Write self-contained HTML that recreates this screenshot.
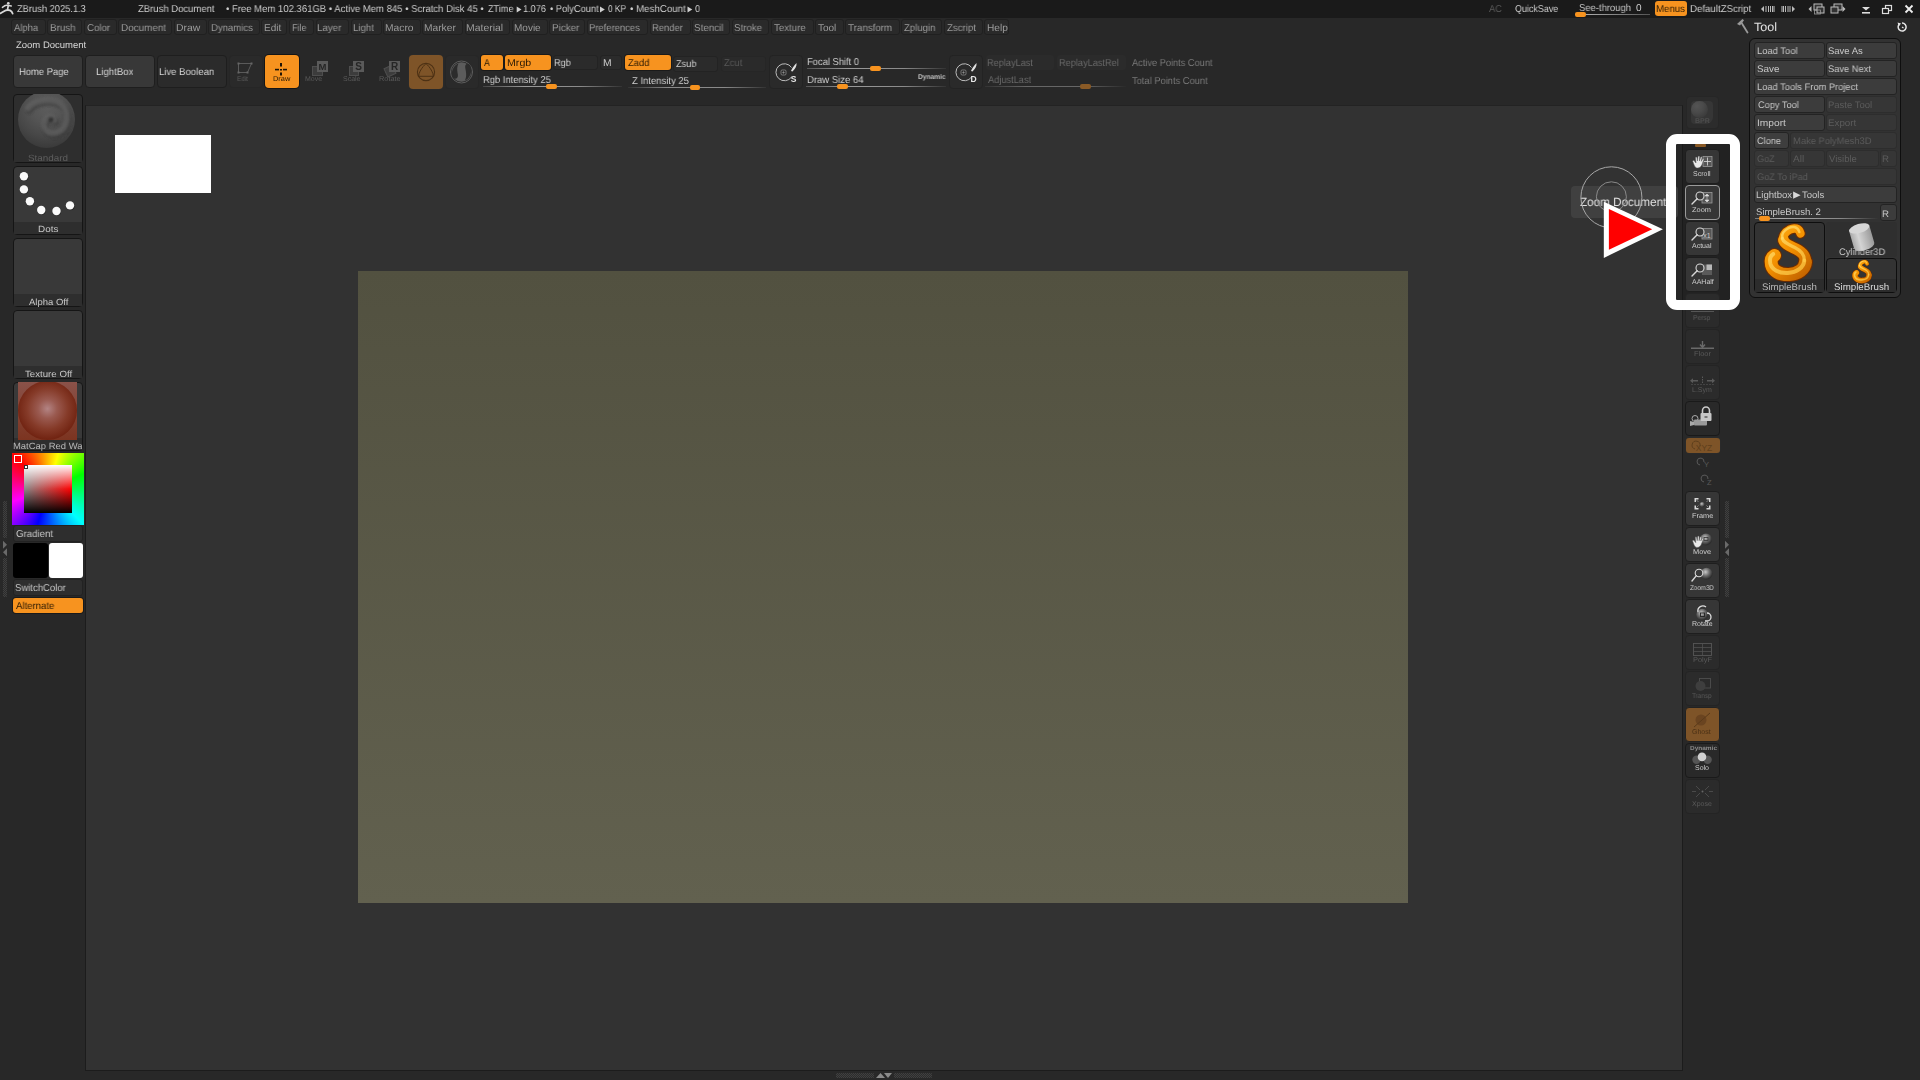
<!DOCTYPE html>
<html><head><meta charset="utf-8">
<style>
*{box-sizing:border-box;margin:0;padding:0}
html,body{width:1920px;height:1080px;overflow:hidden;background:#282828;font-family:"Liberation Sans",sans-serif;position:relative}
.a{position:absolute}
.t{position:absolute;white-space:nowrap;line-height:1;transform-origin:0 0;-webkit-font-smoothing:antialiased;will-change:transform;text-rendering:geometricPrecision}
svg{position:absolute;overflow:visible}
</style></head><body>
<div class="a" style="left:0px;top:0px;width:1920px;height:18px;background:#1a1a1a;"></div>
<div class="t" style="left:17.00px;top:5px;font-size:10px;color:#d0d0d0;transform:scaleX(0.9315);">ZBrush 2025.1.3</div>
<div class="t" style="left:138.00px;top:5px;font-size:10px;color:#d0d0d0;transform:scaleX(0.9500);">ZBrush Document</div>
<div class="t" style="left:226.00px;top:5px;font-size:10px;color:#d0d0d0;transform:scaleX(0.9519);">• Free Mem 102.361GB • Active Mem 845 • Scratch Disk 45 •</div>
<div class="t" style="left:487.80px;top:5px;font-size:10px;color:#d0d0d0;transform:scaleX(0.9107);">ZTime</div>
<div class="t" style="left:523.28px;top:5px;font-size:10px;color:#d0d0d0;transform:scaleX(0.9167);">1.076</div>
<div class="t" style="left:550.00px;top:5px;font-size:10px;color:#d0d0d0;transform:scaleX(0.9288);">• PolyCount</div>
<div class="t" style="left:607.50px;top:5px;font-size:10px;color:#d0d0d0;transform:scaleX(0.8333);">0 KP</div>
<div class="t" style="left:630.00px;top:5px;font-size:10px;color:#d0d0d0;transform:scaleX(0.9702);">• MeshCount</div>
<div class="t" style="left:694.70px;top:5px;font-size:10px;color:#d0d0d0;transform:scaleX(0.9000);">0</div>
<svg style="left:0;top:0" width="720" height="17"><g fill="#d0d0d0"><polygon points="516.7,6.5 521.5,9.5 516.7,12.5"/><polygon points="600,6.5 604.8,9.5 600,12.5"/><polygon points="687.5,6.5 692.3,9.5 687.5,12.5"/></g></svg>
<div class="t" style="left:1489.00px;top:5px;font-size:10px;color:#5a5a5a;transform:scaleX(0.9231);">AC</div>
<div class="t" style="left:1515.00px;top:5px;font-size:10px;color:#d0d0d0;transform:scaleX(0.8958);">QuickSave</div>
<div class="t" style="left:1579.06px;top:4px;font-size:10px;color:#c8c8c8;transform:scaleX(0.9444);">See-through</div>
<div class="t" style="left:1636.00px;top:4px;font-size:10px;color:#d0d0d0;">0</div>
<div class="a" style="left:1575px;top:14px;width:75px;height:1px;background:linear-gradient(90deg,#bbb,#555);"></div>
<div class="a" style="left:1575px;top:12px;width:11px;height:5px;background:#f7931f;border-radius:2px;"></div>
<div class="a" style="left:1655px;top:1px;width:32px;height:15px;background:#f7931f;border-radius:3px;"></div>
<div class="t" style="left:1656.03px;top:5px;font-size:10px;color:#2a1a05;transform:scaleX(0.9655);">Menus</div>
<div class="t" style="left:1690.03px;top:5px;font-size:10px;color:#d0d0d0;transform:scaleX(0.9677);">DefaultZScript</div>
<div class="a" style="left:11px;top:19px;width:35px;height:16px;background:#2a2a2a;border:1px solid #202020;border-radius:3px;"></div>
<div class="t" style="left:14.00px;top:24px;font-size:10px;color:#9c9c9c;transform:scaleX(0.9400);">Alpha</div>
<div class="a" style="left:47px;top:19px;width:35px;height:16px;background:#2a2a2a;border:1px solid #202020;border-radius:3px;"></div>
<div class="t" style="left:49.52px;top:24px;font-size:10px;color:#9c9c9c;transform:scaleX(0.9800);">Brush</div>
<div class="a" style="left:84px;top:19px;width:33px;height:16px;background:#2a2a2a;border:1px solid #202020;border-radius:3px;"></div>
<div class="t" style="left:86.70px;top:24px;font-size:10px;color:#9c9c9c;transform:scaleX(0.9696);">Color</div>
<div class="a" style="left:118px;top:19px;width:54px;height:16px;background:#2a2a2a;border:1px solid #202020;border-radius:3px;"></div>
<div class="t" style="left:120.51px;top:24px;font-size:10px;color:#9c9c9c;transform:scaleX(0.9886);">Document</div>
<div class="a" style="left:174px;top:19px;width:33px;height:16px;background:#2a2a2a;border:1px solid #202020;border-radius:3px;"></div>
<div class="t" style="left:175.66px;top:24px;font-size:10px;color:#9c9c9c;transform:scaleX(1.0364);">Draw</div>
<div class="a" style="left:208px;top:19px;width:52px;height:16px;background:#2a2a2a;border:1px solid #202020;border-radius:3px;"></div>
<div class="t" style="left:210.55px;top:24px;font-size:10px;color:#9c9c9c;transform:scaleX(0.9535);">Dynamics</div>
<div class="a" style="left:261px;top:19px;width:26px;height:16px;background:#2a2a2a;border:1px solid #202020;border-radius:3px;"></div>
<div class="t" style="left:263.50px;top:24px;font-size:10px;color:#9c9c9c;">Edit</div>
<div class="a" style="left:289px;top:19px;width:25px;height:16px;background:#2a2a2a;border:1px solid #202020;border-radius:3px;"></div>
<div class="t" style="left:291.60px;top:24px;font-size:10px;color:#9c9c9c;transform:scaleX(0.9000);">File</div>
<div class="a" style="left:316px;top:19px;width:33px;height:16px;background:#2a2a2a;border:1px solid #202020;border-radius:3px;"></div>
<div class="t" style="left:317.32px;top:24px;font-size:10px;color:#9c9c9c;transform:scaleX(0.9750);">Layer</div>
<div class="a" style="left:351px;top:19px;width:31px;height:16px;background:#2a2a2a;border:1px solid #202020;border-radius:3px;"></div>
<div class="t" style="left:352.73px;top:24px;font-size:10px;color:#9c9c9c;transform:scaleX(0.9667);">Light</div>
<div class="a" style="left:383px;top:19px;width:38px;height:16px;background:#2a2a2a;border:1px solid #202020;border-radius:3px;"></div>
<div class="t" style="left:385.27px;top:24px;font-size:10px;color:#9c9c9c;transform:scaleX(1.0269);">Macro</div>
<div class="a" style="left:422px;top:19px;width:41px;height:16px;background:#2a2a2a;border:1px solid #202020;border-radius:3px;"></div>
<div class="t" style="left:424.28px;top:24px;font-size:10px;color:#9c9c9c;transform:scaleX(1.0233);">Marker</div>
<div class="a" style="left:465px;top:19px;width:45px;height:16px;background:#2a2a2a;border:1px solid #202020;border-radius:3px;"></div>
<div class="t" style="left:466.46px;top:24px;font-size:10px;color:#9c9c9c;transform:scaleX(1.0441);">Material</div>
<div class="a" style="left:512px;top:19px;width:36px;height:16px;background:#2a2a2a;border:1px solid #202020;border-radius:3px;"></div>
<div class="t" style="left:514.31px;top:24px;font-size:10px;color:#9c9c9c;transform:scaleX(0.9880);">Movie</div>
<div class="a" style="left:549px;top:19px;width:36px;height:16px;background:#2a2a2a;border:1px solid #202020;border-radius:3px;"></div>
<div class="t" style="left:551.52px;top:24px;font-size:10px;color:#9c9c9c;transform:scaleX(0.9808);">Picker</div>
<div class="a" style="left:587px;top:19px;width:61px;height:16px;background:#2a2a2a;border:1px solid #202020;border-radius:3px;"></div>
<div class="t" style="left:589.36px;top:24px;font-size:10px;color:#9c9c9c;transform:scaleX(0.9434);">Preferences</div>
<div class="a" style="left:650px;top:19px;width:41px;height:16px;background:#2a2a2a;border:1px solid #202020;border-radius:3px;"></div>
<div class="t" style="left:652.36px;top:24px;font-size:10px;color:#9c9c9c;transform:scaleX(0.9419);">Render</div>
<div class="a" style="left:692px;top:19px;width:38px;height:16px;background:#2a2a2a;border:1px solid #202020;border-radius:3px;"></div>
<div class="t" style="left:694.02px;top:24px;font-size:10px;color:#9c9c9c;transform:scaleX(0.9821);">Stencil</div>
<div class="a" style="left:732px;top:19px;width:37px;height:16px;background:#2a2a2a;border:1px solid #202020;border-radius:3px;"></div>
<div class="t" style="left:733.73px;top:24px;font-size:10px;color:#9c9c9c;transform:scaleX(0.9741);">Stroke</div>
<div class="a" style="left:771px;top:19px;width:43px;height:16px;background:#2a2a2a;border:1px solid #202020;border-radius:3px;"></div>
<div class="t" style="left:774.00px;top:24px;font-size:10px;color:#9c9c9c;transform:scaleX(0.9688);">Texture</div>
<div class="a" style="left:815px;top:19px;width:29px;height:16px;background:#2a2a2a;border:1px solid #202020;border-radius:3px;"></div>
<div class="t" style="left:818.00px;top:24px;font-size:10px;color:#9c9c9c;transform:scaleX(0.9889);">Tool</div>
<div class="a" style="left:845px;top:19px;width:55px;height:16px;background:#2a2a2a;border:1px solid #202020;border-radius:3px;"></div>
<div class="t" style="left:848.00px;top:24px;font-size:10px;color:#9c9c9c;transform:scaleX(0.9778);">Transform</div>
<div class="a" style="left:901px;top:19px;width:41px;height:16px;background:#2a2a2a;border:1px solid #202020;border-radius:3px;"></div>
<div class="t" style="left:904.40px;top:24px;font-size:10px;color:#9c9c9c;transform:scaleX(0.9563);">Zplugin</div>
<div class="a" style="left:944px;top:19px;width:39px;height:16px;background:#2a2a2a;border:1px solid #202020;border-radius:3px;"></div>
<div class="t" style="left:947.00px;top:24px;font-size:10px;color:#9c9c9c;transform:scaleX(0.9667);">Zscript</div>
<div class="a" style="left:984px;top:19px;width:25px;height:16px;background:#2a2a2a;border:1px solid #202020;border-radius:3px;"></div>
<div class="t" style="left:986.68px;top:24px;font-size:10px;color:#9c9c9c;transform:scaleX(1.0158);">Help</div>
<div class="t" style="left:16.30px;top:41px;font-size:9.5px;color:#d8d8d8;">Zoom Document</div>
<div class="a" style="left:85px;top:105px;width:1598px;height:966px;background:#323232;border:1px solid #1c1c1c;border-top-color:#232323;"></div>
<div class="a" style="left:358px;top:271px;width:1050px;height:632px;background:linear-gradient(#525140,#62614f)"></div>
<div class="a" style="left:115px;top:135px;width:96px;height:58px;background:#ffffff;"></div>
<div class="a" style="left:13px;top:55px;width:70px;height:33px;background:#383838;border:1px solid #1e1e1e;border-radius:4px;"></div>
<div class="a" style="left:85px;top:55px;width:70px;height:33px;background:#383838;border:1px solid #1e1e1e;border-radius:4px;"></div>
<div class="a" style="left:157px;top:55px;width:70px;height:33px;background:#2b2b2b;border:1px solid #1e1e1e;border-radius:4px;"></div>
<div class="t" style="left:19.06px;top:68px;font-size:10px;color:#d8d8d8;transform:scaleX(0.9412);">Home Page</div>
<div class="t" style="left:95.54px;top:68px;font-size:10px;color:#d8d8d8;transform:scaleX(0.9605);">LightBox</div>
<div class="t" style="left:158.54px;top:68px;font-size:10px;color:#d8d8d8;transform:scaleX(0.9554);">Live Boolean</div>
<div class="a" style="left:229px;top:55px;width:34px;height:33px;background:#2a2a2a;border:1px solid #262626;border-radius:4px;"></div>
<div class="a" style="left:265px;top:55px;width:34px;height:33px;background:#f7931f;box-shadow:0 0 0 1px #151515;border-radius:4px;"></div>
<div class="a" style="left:409px;top:55px;width:34px;height:34px;background:#7e5428;box-shadow:0 0 0 1px #2a2a2a;border-radius:4px;"></div>
<div class="a" style="left:445px;top:55px;width:34px;height:34px;background:#2a2a2a;border:1px solid #262626;border-radius:4px;"></div>
<div class="t" style="left:237.00px;top:76px;font-size:7px;color:#5a5a5a;transform:scaleX(0.9167);">Edit</div>
<div class="t" style="left:273.00px;top:76px;font-size:7px;color:#2a1a05;transform:scaleX(1.0625);">Draw</div>
<div class="t" style="left:305.00px;top:76px;font-size:7px;color:#5a5a5a;">Move</div>
<div class="t" style="left:343.00px;top:76px;font-size:7px;color:#5a5a5a;">Scale</div>
<div class="t" style="left:379.00px;top:76px;font-size:7px;color:#5a5a5a;transform:scaleX(1.0500);">Rotate</div>
<div class="a" style="left:481px;top:55px;width:22px;height:15px;background:#f7931f;box-shadow:0 0 0 1px #1a1a1a;border-radius:3px;"></div>
<div class="a" style="left:505px;top:55px;width:46px;height:15px;background:#f7931f;box-shadow:0 0 0 1px #1a1a1a;border-radius:3px;"></div>
<div class="a" style="left:553px;top:55px;width:45px;height:15px;background:#2b2b2b;border:1px solid #232323;border-radius:3px;"></div>
<div class="a" style="left:600px;top:55px;width:22px;height:15px;background:#2b2b2b;border:1px solid #232323;border-radius:3px;"></div>
<div class="t" style="left:483.80px;top:59px;font-size:10px;color:#2a1a05;transform:scaleX(0.8857);">A</div>
<div class="t" style="left:506.64px;top:59px;font-size:10px;color:#2a1a05;transform:scaleX(1.0619);">Mrgb</div>
<div class="t" style="left:554.48px;top:59px;font-size:10px;color:#d0d0d0;transform:scaleX(0.9176);">Rgb</div>
<div class="t" style="left:602.77px;top:59px;font-size:10px;color:#d0d0d0;transform:scaleX(1.0286);">M</div>
<div class="t" style="left:482.86px;top:76px;font-size:10px;color:#d0d0d0;transform:scaleX(0.9380);">Rgb Intensity 25</div>
<div class="a" style="left:483px;top:86px;width:139px;height:1px;background:linear-gradient(90deg,#444,#9a9a9a 30%,#8a8a8a 70%,#333);"></div>
<div class="a" style="left:546px;top:84px;width:11px;height:5px;background:#f7931f;border-radius:2px;"></div>
<div class="a" style="left:625px;top:55px;width:46px;height:15px;background:#f7931f;box-shadow:0 0 0 1px #1a1a1a;border-radius:3px;"></div>
<div class="a" style="left:673px;top:56px;width:45px;height:16px;background:#2b2b2b;border:1px solid #232323;border-radius:3px;"></div>
<div class="a" style="left:721px;top:56px;width:45px;height:16px;background:#2a2a2a;border:1px solid #262626;border-radius:3px;"></div>
<div class="t" style="left:627.70px;top:59px;font-size:10px;color:#2a1a05;transform:scaleX(0.9364);">Zadd</div>
<div class="t" style="left:675.70px;top:60px;font-size:10px;color:#d0d0d0;transform:scaleX(0.9227);">Zsub</div>
<div class="t" style="left:723.80px;top:59px;font-size:10px;color:#585858;transform:scaleX(0.9421);">Zcut</div>
<div class="t" style="left:632.00px;top:77px;font-size:10px;color:#d0d0d0;transform:scaleX(0.9467);">Z Intensity 25</div>
<div class="a" style="left:628px;top:87px;width:138px;height:1px;background:linear-gradient(90deg,#333,#8a8a8a 30%,#8a8a8a 70%,#333);"></div>
<div class="a" style="left:690px;top:85px;width:10px;height:5px;background:#f7931f;border-radius:2px;"></div>
<div class="a" style="left:769px;top:55px;width:34px;height:34px;background:#2a2a2a;border:1px solid #232323;border-radius:4px;"></div>
<div class="t" style="left:806.76px;top:58px;font-size:10px;color:#d0d0d0;transform:scaleX(0.9352);">Focal Shift 0</div>
<div class="t" style="left:806.75px;top:76px;font-size:10px;color:#d0d0d0;transform:scaleX(0.9517);">Draw Size 64</div>
<div class="t" style="left:917.60px;top:74px;font-size:7px;color:#bdbdbd;font-weight:700;transform:scaleX(0.9448);">Dynamic</div>
<div class="a" style="left:807px;top:68px;width:139px;height:1px;background:linear-gradient(90deg,#555,#9a9a9a 30%,#8a8a8a 70%,#333);"></div>
<div class="a" style="left:870px;top:66px;width:11px;height:5px;background:#f7931f;border-radius:2px;"></div>
<div class="a" style="left:806px;top:86px;width:140px;height:1px;background:linear-gradient(90deg,#555,#9a9a9a 30%,#8a8a8a 70%,#333);"></div>
<div class="a" style="left:837px;top:84px;width:11px;height:5px;background:#f7931f;border-radius:2px;"></div>
<div class="a" style="left:949px;top:55px;width:34px;height:34px;background:#2a2a2a;border:1px solid #232323;border-radius:4px;"></div>
<div class="a" style="left:986px;top:55px;width:68px;height:15px;background:#2b2b2b;border-radius:3px;"></div>
<div class="a" style="left:1057px;top:55px;width:69px;height:15px;background:#2b2b2b;border-radius:3px;"></div>
<div class="t" style="left:986.68px;top:59px;font-size:10px;color:#6a6a6a;transform:scaleX(0.9163);">ReplayLast</div>
<div class="t" style="left:1058.58px;top:59px;font-size:10px;color:#6a6a6a;transform:scaleX(0.9190);">ReplayLastRel</div>
<div class="t" style="left:987.60px;top:76px;font-size:10px;color:#6a6a6a;transform:scaleX(0.9234);">AdjustLast</div>
<div class="a" style="left:985px;top:86px;width:141px;height:1px;background:linear-gradient(90deg,#333,#666 30%,#666 70%,#2a2a2a);"></div>
<div class="a" style="left:1080px;top:84px;width:11px;height:5px;background:#8a5a26;border-radius:2px;"></div>
<div class="t" style="left:1131.70px;top:59px;font-size:10px;color:#7a7a7a;transform:scaleX(0.9230);">Active Points Count</div>
<div class="t" style="left:1132.00px;top:77px;font-size:10px;color:#7a7a7a;transform:scaleX(0.9321);">Total Points Count</div>
<div class="a" style="left:13px;top:94px;width:70px;height:69px;background:#2e2e2e;border:1px solid #151515;border-radius:4px;"></div>
<div class="a" style="left:14px;top:150px;width:68px;height:12px;background:#2e2e2e;"></div>
<div class="t" style="left:27.90px;top:154px;font-size:9px;color:#5e5e5e;transform:scaleX(1.0971);">Standard</div>
<div class="a" style="left:13px;top:166px;width:70px;height:69px;background:#393939;border:1px solid #151515;border-radius:4px;"></div>
<div class="a" style="left:14px;top:222px;width:68px;height:12px;background:#2e2e2e;"></div>
<div class="t" style="left:37.80px;top:225px;font-size:9px;color:#c8c8c8;transform:scaleX(1.1000);">Dots</div>
<div class="a" style="left:13px;top:238px;width:70px;height:69px;background:#393939;border:1px solid #151515;border-radius:4px;"></div>
<div class="a" style="left:14px;top:294px;width:68px;height:12px;background:#2e2e2e;"></div>
<div class="t" style="left:29.00px;top:298px;font-size:9px;color:#c8c8c8;transform:scaleX(1.0541);">Alpha Off</div>
<div class="a" style="left:13px;top:310px;width:70px;height:69px;background:#393939;border:1px solid #151515;border-radius:4px;"></div>
<div class="a" style="left:14px;top:366px;width:68px;height:12px;background:#2e2e2e;"></div>
<div class="t" style="left:24.70px;top:370px;font-size:9px;color:#c8c8c8;transform:scaleX(1.0750);">Texture Off</div>
<div class="a" style="left:13px;top:382px;width:70px;height:69px;background:#393939;border:1px solid #151515;border-radius:4px;"></div>
<div class="a" style="left:14px;top:438px;width:68px;height:12px;background:#2e2e2e;"></div>
<div class="a" style="left:0;top:0;width:82px;height:460px;overflow:hidden">
<div class="t" style="left:12.55px;top:442px;font-size:9px;color:#b8b8b8;transform:scaleX(1.0493);">MatCap Red Wax</div>
</div>
<div class="a" style="left:12px;top:453px;width:72px;height:72px;background:conic-gradient(from -45deg,#f00,#ff0 17%,#0f0 31%,#0ff 50%,#00f 67%,#f0f 82%,#f00)"></div>
<div class="a" style="left:24px;top:465px;width:48px;height:48px;background:linear-gradient(180deg,#fff 0%,rgba(255,255,255,0) 50%,rgba(0,0,0,0) 50%,#000 100%),linear-gradient(90deg,#888,#f00)"></div>
<div class="a" style="left:14px;top:455px;width:8px;height:8px;background:#f00;border:1px solid #fff;"></div>
<div class="a" style="left:24px;top:465px;width:4px;height:4px;background:#fff;border:1px solid #333;"></div>
<div class="a" style="left:13px;top:525px;width:70px;height:17px;background:#2e2e2e;border:1px solid #222222;border-radius:3px;"></div>
<div class="t" style="left:15.60px;top:530px;font-size:10px;color:#c8c8c8;transform:scaleX(0.9658);">Gradient</div>
<div class="a" style="left:13px;top:543px;width:35px;height:35px;background:#000;border-radius:3px;"></div>
<div class="a" style="left:49px;top:543px;width:34px;height:35px;background:#fff;border-radius:3px;"></div>
<div class="a" style="left:13px;top:579px;width:70px;height:17px;background:#2e2e2e;border:1px solid #222222;border-radius:3px;"></div>
<div class="t" style="left:14.65px;top:584px;font-size:10px;color:#c8c8c8;transform:scaleX(0.9500);">SwitchColor</div>
<div class="a" style="left:13px;top:598px;width:70px;height:15px;background:#f7931f;box-shadow:0 0 0 1px #1a1a1a;border-radius:3px;"></div>
<div class="t" style="left:15.60px;top:602px;font-size:10px;color:#2a1a05;transform:scaleX(0.9575);">Alternate</div>
<div class="a" style="left:1686px;top:96px;width:33px;height:33px;background:#2c2c2c;border:1px solid #262626;border-radius:4px;"></div>
<div class="a" style="left:1691px;top:101px;width:22px;height:23px;border-radius:4px 4px 7px 4px;background:#363636"></div>
<div class="a" style="left:1691px;top:101px;width:17px;height:17px;border-radius:50%;background:radial-gradient(circle at 35% 30%,#545454 0,#4a4a4a 40%,#3c3c3c 75%,#2e2e2e 100%)"></div>
<div class="t" style="left:1694.80px;top:118px;font-size:7px;color:#4e4e4e;font-weight:700;transform:scaleX(0.9786);">BPR</div>
<div class="a" style="left:1676px;top:144px;width:54px;height:156px;background:#222"></div>
<div class="a" style="left:1676px;top:144px;width:6px;height:156px;background:#262626"></div>
<div class="a" style="left:1682px;top:144px;width:1px;height:156px;background:#1a1a1a;"></div>
<div class="a" style="left:1695px;top:144px;width:11px;height:3px;background:#8a5a26;border-radius:1px;"></div>
<div class="a" style="left:1685px;top:149px;width:35px;height:35px;background:#363636;border:1px solid #1e1e1e;border-radius:4px;"></div>
<div class="t" style="left:1693.00px;top:171px;font-size:7px;color:#d0d0d0;">Scroll</div>
<div class="a" style="left:1685px;top:185px;width:35px;height:35px;background:#363636;border:1px solid #9a9a9a;border-radius:4px;"></div>
<div class="t" style="left:1692.00px;top:207px;font-size:7px;color:#d0d0d0;transform:scaleX(1.0588);">Zoom</div>
<div class="a" style="left:1685px;top:221px;width:35px;height:35px;background:#363636;border:1px solid #1e1e1e;border-radius:4px;"></div>
<div class="t" style="left:1692.00px;top:243px;font-size:7px;color:#d0d0d0;">Actual</div>
<div class="a" style="left:1685px;top:257px;width:35px;height:35px;background:#363636;border:1px solid #1e1e1e;border-radius:4px;"></div>
<div class="t" style="left:1692.00px;top:279px;font-size:7px;color:#d0d0d0;">AAHalf</div>
<div class="a" style="left:1685px;top:293px;width:35px;height:35px;background:#2b2b2b;border:1px solid #242424;border-radius:4px;"></div>
<div class="t" style="left:1693.00px;top:315px;font-size:7px;color:#5a5a5a;transform:scaleX(0.9444);">Persp</div>
<div class="a" style="left:1685px;top:329px;width:35px;height:35px;background:#2b2b2b;border:1px solid #242424;border-radius:4px;"></div>
<div class="t" style="left:1694.00px;top:351px;font-size:7px;color:#5a5a5a;transform:scaleX(1.0667);">Floor</div>
<div class="a" style="left:1685px;top:365px;width:35px;height:35px;background:#2b2b2b;border:1px solid #242424;border-radius:4px;"></div>
<div class="t" style="left:1692.00px;top:387px;font-size:7px;color:#5a5a5a;">L.Sym</div>
<div class="a" style="left:1685px;top:401px;width:35px;height:35px;background:#292929;border:1px solid #1a1a1a;border-radius:4px;"></div>
<div class="a" style="left:1686px;top:438px;width:34px;height:15px;background:#7e5428;box-shadow:0 0 0 1px #2a2a2a;border-radius:3px;"></div>
<div class="a" style="left:1685px;top:491px;width:35px;height:35px;background:#363636;border:1px solid #1e1e1e;border-radius:4px;"></div>
<div class="t" style="left:1692.00px;top:513px;font-size:7px;color:#d0d0d0;transform:scaleX(1.0500);">Frame</div>
<div class="a" style="left:1685px;top:527px;width:35px;height:35px;background:#363636;border:1px solid #1e1e1e;border-radius:4px;"></div>
<div class="t" style="left:1693.00px;top:549px;font-size:7px;color:#d0d0d0;transform:scaleX(1.0588);">Move</div>
<div class="a" style="left:1685px;top:563px;width:35px;height:35px;background:#363636;border:1px solid #1e1e1e;border-radius:4px;"></div>
<div class="t" style="left:1690.00px;top:585px;font-size:7px;color:#d0d0d0;transform:scaleX(0.8889);">Zoom3D</div>
<div class="a" style="left:1685px;top:599px;width:35px;height:35px;background:#363636;border:1px solid #1e1e1e;border-radius:4px;"></div>
<div class="t" style="left:1692.00px;top:621px;font-size:7px;color:#d0d0d0;">Rotate</div>
<div class="a" style="left:1685px;top:635px;width:35px;height:35px;background:#2b2b2b;border:1px solid #242424;border-radius:4px;"></div>
<div class="t" style="left:1693.00px;top:657px;font-size:7px;color:#5a5a5a;transform:scaleX(1.0588);">PolyF</div>
<div class="a" style="left:1685px;top:671px;width:35px;height:35px;background:#2b2b2b;border:1px solid #242424;border-radius:4px;"></div>
<div class="t" style="left:1692.00px;top:693px;font-size:7px;color:#5a5a5a;transform:scaleX(0.9048);">Transp</div>
<div class="a" style="left:1685px;top:707px;width:35px;height:35px;background:#7e5428;border:1px solid #222;border-radius:4px;"></div>
<div class="t" style="left:1692.00px;top:729px;font-size:7px;color:#4a3015;">Ghost</div>
<div class="a" style="left:1685px;top:743px;width:35px;height:35px;background:#292929;border:1px solid #1a1a1a;border-radius:4px;"></div>
<div class="t" style="left:1695.00px;top:765px;font-size:7px;color:#d0d0d0;">Solo</div>
<div class="t" style="left:1690.00px;top:746px;font-size:6px;color:#8a8a8a;font-weight:700;transform:scaleX(1.0800);">Dynamic</div>
<div class="a" style="left:1685px;top:779px;width:35px;height:35px;background:#2b2b2b;border:1px solid #242424;border-radius:4px;"></div>
<div class="t" style="left:1692.00px;top:801px;font-size:7px;color:#5a5a5a;">Xpose</div>
<div class="a" style="left:1749px;top:38px;width:152px;height:260px;background:#323232;border:1px solid #0e0e0e;border-radius:6px;"></div>
<div class="t" style="left:1754.00px;top:21px;font-size:12px;color:#e0e0e0;transform:scaleX(1.0476);">Tool</div>
<div class="a" style="left:1754px;top:42px;width:71px;height:17px;background:#3c3c3c;border:1px solid #232323;border-radius:3px;"></div>
<div class="t" style="left:1756.71px;top:47px;font-size:9.5px;color:#c8c8c8;transform:scaleX(0.9875);">Load Tool</div>
<div class="a" style="left:1826px;top:42px;width:71px;height:17px;background:#3c3c3c;border:1px solid #232323;border-radius:3px;"></div>
<div class="t" style="left:1827.91px;top:47px;font-size:9.5px;color:#c8c8c8;transform:scaleX(0.9939);">Save As</div>
<div class="a" style="left:1754px;top:60px;width:71px;height:17px;background:#3c3c3c;border:1px solid #232323;border-radius:3px;"></div>
<div class="t" style="left:1756.66px;top:65px;font-size:9.5px;color:#c8c8c8;transform:scaleX(1.0400);">Save</div>
<div class="a" style="left:1826px;top:60px;width:71px;height:17px;background:#3c3c3c;border:1px solid #232323;border-radius:3px;"></div>
<div class="t" style="left:1827.92px;top:65px;font-size:9.5px;color:#c8c8c8;transform:scaleX(0.9791);">Save Next</div>
<div class="a" style="left:1754px;top:78px;width:143px;height:17px;background:#3c3c3c;border:1px solid #232323;border-radius:3px;"></div>
<div class="t" style="left:1756.72px;top:83px;font-size:9.5px;color:#c8c8c8;transform:scaleX(0.9814);">Load Tools From Project</div>
<div class="a" style="left:1754px;top:96px;width:71px;height:17px;background:#3c3c3c;border:1px solid #232323;border-radius:3px;"></div>
<div class="t" style="left:1757.70px;top:101px;font-size:9.5px;color:#c8c8c8;transform:scaleX(0.9667);">Copy Tool</div>
<div class="a" style="left:1826px;top:96px;width:71px;height:17px;background:#363636;border:1px solid #2d2d2d;border-radius:3px;"></div>
<div class="t" style="left:1828.40px;top:101px;font-size:9.5px;color:#5c5c5c;">Paste Tool</div>
<div class="a" style="left:1754px;top:114px;width:71px;height:17px;background:#3c3c3c;border:1px solid #232323;border-radius:3px;"></div>
<div class="t" style="left:1756.63px;top:119px;font-size:9.5px;color:#c8c8c8;transform:scaleX(1.0731);">Import</div>
<div class="a" style="left:1826px;top:114px;width:71px;height:17px;background:#363636;border:1px solid #2d2d2d;border-radius:3px;"></div>
<div class="t" style="left:1828.37px;top:119px;font-size:9.5px;color:#5c5c5c;transform:scaleX(1.0269);">Export</div>
<div class="a" style="left:1754px;top:132px;width:35px;height:17px;background:#3e3e3e;border:1px solid #232323;border-radius:3px;"></div>
<div class="t" style="left:1757.00px;top:137px;font-size:9.5px;color:#c8c8c8;transform:scaleX(0.9667);">Clone</div>
<div class="a" style="left:1790px;top:132px;width:107px;height:17px;background:#363636;border:1px solid #2d2d2d;border-radius:3px;"></div>
<div class="t" style="left:1792.61px;top:137px;font-size:9.5px;color:#5c5c5c;transform:scaleX(0.9859);">Make PolyMesh3D</div>
<div class="a" style="left:1754px;top:150px;width:35px;height:17px;background:#363636;border:1px solid #2d2d2d;border-radius:3px;"></div>
<div class="t" style="left:1757.00px;top:155px;font-size:9.5px;color:#5c5c5c;transform:scaleX(0.9556);">GoZ</div>
<div class="a" style="left:1790px;top:150px;width:35px;height:17px;background:#363636;border:1px solid #2d2d2d;border-radius:3px;"></div>
<div class="t" style="left:1792.70px;top:155px;font-size:9.5px;color:#5c5c5c;transform:scaleX(1.0600);">All</div>
<div class="a" style="left:1826px;top:150px;width:53px;height:17px;background:#363636;border:1px solid #2d2d2d;border-radius:3px;"></div>
<div class="t" style="left:1828.80px;top:155px;font-size:9.5px;color:#5c5c5c;transform:scaleX(0.9926);">Visible</div>
<div class="a" style="left:1880px;top:150px;width:17px;height:17px;background:#363636;border:1px solid #2d2d2d;border-radius:3px;"></div>
<div class="t" style="left:1882.38px;top:155px;font-size:9.5px;color:#5c5c5c;transform:scaleX(1.0200);">R</div>
<div class="a" style="left:1754px;top:168px;width:143px;height:17px;background:#363636;border:1px solid #2d2d2d;border-radius:3px;"></div>
<div class="t" style="left:1757.00px;top:173px;font-size:9.5px;color:#5c5c5c;transform:scaleX(0.9654);">GoZ To iPad</div>
<div class="a" style="left:1754px;top:186px;width:143px;height:17px;background:#3c3c3c;border:1px solid #232323;border-radius:3px;"></div>
<div class="t" style="left:1755.99px;top:191px;font-size:9.5px;color:#c8c8c8;transform:scaleX(1.0057);">Lightbox</div>
<div class="t" style="left:1801.50px;top:191px;font-size:9.5px;color:#c8c8c8;transform:scaleX(0.9864);">Tools</div>
<svg style="left:1790px;top:188px" width="14" height="14"><polygon points="3.1,3.6 10.6,7.2 3.1,10.8" fill="#d8d8d8"/></svg>
<div class="t" style="left:1755.99px;top:208px;font-size:9.5px;color:#c8c8c8;transform:scaleX(1.0079);">SimpleBrush. 2</div>
<div class="a" style="left:1755px;top:218px;width:123px;height:1px;background:linear-gradient(90deg,#777,#aaa 20%,#888 70%,#333);"></div>
<div class="a" style="left:1759px;top:216px;width:11px;height:5px;background:#f7931f;border-radius:2px;"></div>
<div class="a" style="left:1880px;top:204px;width:17px;height:17px;background:#3c3c3c;border:1px solid #232323;border-radius:3px;"></div>
<div class="t" style="left:1882.38px;top:210px;font-size:9.5px;color:#c8c8c8;transform:scaleX(1.0200);">R</div>
<div class="a" style="left:1754px;top:222px;width:71px;height:71px;background:#333333;border:1px solid #0e0e0e;border-radius:4px;"></div>
<div class="a" style="left:1755px;top:279px;width:69px;height:13px;background:#2c2c2c;"></div>
<div class="t" style="left:1762.28px;top:283px;font-size:9.5px;color:#b8b8b8;transform:scaleX(1.0192);">SimpleBrush</div>
<div class="a" style="left:1826px;top:222px;width:71px;height:35px;background:#2f2f2f;border-radius:3px;"></div>
<div class="t" style="left:1838.80px;top:248px;font-size:9.5px;color:#c8c8c8;transform:scaleX(0.9830);">Cylinder3D</div>
<div class="a" style="left:1826px;top:258px;width:71px;height:35px;background:#333333;border:1px solid #0e0e0e;border-radius:4px;"></div>
<div class="a" style="left:1827px;top:279px;width:69px;height:13px;background:#2c2c2c;"></div>
<div class="t" style="left:1833.97px;top:283px;font-size:9.5px;color:#dcdcdc;transform:scaleX(1.0250);">SimpleBrush</div>
<svg style="left:0;top:0" width="0" height="0"><defs><radialGradient id="sg" cx="42%" cy="35%" r="60%"><stop offset="0" stop-color="#c8c8c8"/><stop offset="0.55" stop-color="#6a6a6a"/><stop offset="1" stop-color="#2e2e2e"/></radialGradient></defs></svg>
<div class="a" style="left:14px;top:94px;width:68px;height:56px;overflow:hidden"><div class="a" style="left:4px;top:-3px;width:57px;height:57px;border-radius:50%;background:radial-gradient(circle at 50% 28%,#5c5c5c 0,#555 30%,#474747 60%,#383838 85%,#303030 100%)"></div></div>
<svg style="left:14px;top:94px;" width="68" height="56" viewBox="0 0 68 56"><defs><filter id="bl" x="-20%" y="-20%" width="140%" height="140%"><feGaussianBlur stdDeviation="1.3"/></filter><clipPath id="sc"><circle cx="32.5" cy="25.5" r="28.5"/></clipPath></defs><g clip-path="url(#sc)" filter="url(#bl)" fill="none" stroke-linecap="round"><path d="M14 14 C 20 6, 38 3, 47 10 C 56 18, 54 34, 44 38 C 34 42, 27 33, 31 26 C 34 21, 40 22, 40 26" stroke="#383838" stroke-width="7" opacity="0.55" transform="translate(1.5,2.5)"/><path d="M14 14 C 20 6, 38 3, 47 10 C 56 18, 54 34, 44 38 C 34 42, 27 33, 31 26 C 34 21, 40 22, 40 26" stroke="#626262" stroke-width="5.5" opacity="0.75"/><circle cx="37" cy="25.5" r="2.6" fill="#333" stroke="none"/></g></svg>
<svg style="left:0px;top:160px;" width="90" height="60" viewBox="0 0 90 60"><circle cx="24.5" cy="16.99999999999999" r="4" fill="#1e1e1e" opacity="0.6"/><circle cx="23.9" cy="16.19999999999999" r="4.2" fill="#fafafa"/><circle cx="24.5" cy="30.200000000000006" r="4" fill="#1e1e1e" opacity="0.6"/><circle cx="23.9" cy="29.400000000000006" r="4.2" fill="#fafafa"/><circle cx="30.5" cy="41.999999999999986" r="4" fill="#1e1e1e" opacity="0.6"/><circle cx="29.9" cy="41.19999999999999" r="4.2" fill="#fafafa"/><circle cx="41.85" cy="50.8" r="4" fill="#1e1e1e" opacity="0.6"/><circle cx="41.25" cy="50" r="4.2" fill="#fafafa"/><circle cx="57.1" cy="51.8" r="4" fill="#1e1e1e" opacity="0.6"/><circle cx="56.5" cy="51" r="4.2" fill="#fafafa"/><circle cx="70.6" cy="46.2" r="4" fill="#1e1e1e" opacity="0.6"/><circle cx="70" cy="45.400000000000006" r="4.2" fill="#fafafa"/></svg>
<div class="a" style="left:18px;top:382px;width:59px;height:58px;overflow:hidden;background:linear-gradient(#8a5249,#7c3420)"><div class="a" style="left:0px;top:-1px;width:59px;height:59px;border-radius:50%;background:radial-gradient(circle at 50% 47%,#b38484 0,#9a5a50 22%,#853a28 48%,#6e200e 75%,#4e1406 100%)"></div></div>
<svg style="left:236px;top:61px;" width="20" height="15" viewBox="0 0 20 15"><path d="M2.5 2.5 L15.5 2.5 L11.5 11.5 L2.5 11.5 Z" fill="none" stroke="#5a5a5a" stroke-width="1"/><rect x="1.5" y="1.5" width="2" height="2" fill="#666"/><rect x="14.5" y="1.5" width="2" height="2" fill="#666"/><rect x="1.5" y="10.5" width="2" height="2" fill="#666"/><rect x="10.5" y="10.5" width="2" height="2" fill="#666"/></svg>
<svg style="left:270px;top:60px;" width="22" height="18" viewBox="0 0 22 18"><g fill="#1e1408"><rect x="10" y="3" width="2" height="3.5"/><rect x="10" y="9" width="2" height="1.5"/><rect x="10" y="12.5" width="2" height="3"/><rect x="5" y="8.8" width="4" height="1.6"/><rect x="13" y="8.8" width="4" height="1.6"/></g></svg>
<svg style="left:300px;top:58px;" width="34" height="20" viewBox="0 0 34 20"><rect x="12.5" y="8.5" width="10" height="9" fill="#3c3c3c" stroke="#4e4e4e"/><rect x="17" y="3" width="11" height="11" fill="#5a5a5a"/><text x="22.5" y="12.3" font-family="Liberation Sans" font-weight="700" font-size="9.5" text-anchor="middle" fill="#262626">M</text></svg>
<svg style="left:336px;top:58px;" width="34" height="20" viewBox="0 0 34 20"><rect x="13.5" y="8.5" width="9" height="9" fill="#3c3c3c" stroke="#4e4e4e"/><rect x="17" y="3" width="11" height="11" fill="#5a5a5a"/><text x="22.5" y="12.3" font-family="Liberation Sans" font-weight="700" font-size="10" text-anchor="middle" fill="#262626">S</text></svg>
<svg style="left:372px;top:58px;" width="34" height="20" viewBox="0 0 34 20"><rect x="13.5" y="8.5" width="9" height="9" fill="#3c3c3c" stroke="#4e4e4e" transform="rotate(-25 18 13)"/><rect x="17" y="3" width="11" height="11" fill="#5a5a5a"/><text x="22.5" y="12.3" font-family="Liberation Sans" font-weight="700" font-size="10" text-anchor="middle" fill="#262626">R</text></svg>
<svg style="left:409px;top:55px;" width="34" height="34" viewBox="0 0 34 34"><circle cx="17" cy="17" r="8.6" fill="none" stroke="#4d3114" stroke-width="1.1"/><path d="M17 8.6 C 13 12, 9.5 18, 9.7 21.5 M17 8.6 C 21 12, 24.5 18, 24.3 21.5 M 9.8 21.3 L 24.2 21.3" fill="none" stroke="#4d3114" stroke-width="1"/></svg>
<svg style="left:445px;top:55px;" width="34" height="34" viewBox="0 0 34 34"><circle cx="16.5" cy="17" r="11" fill="none" stroke="#5e5e5e" stroke-width="1"/><circle cx="16.5" cy="17" r="9.8" fill="#5c5c5c"/><path d="M13.5 8.3 C 9 10.5, 6.8 15, 6.8 19.5 C 6.8 22.2, 8.3 23.8, 10 23.8 C 12 23.8, 13.1 22.2, 12.9 20 C 12.6 17, 11.3 13, 13.5 8.3 Z" fill="#2c2c2c"/><path d="M19.8 25.8 C 24.5 23.5, 26.4 18.5, 26.2 14.2 C 26 11, 24.6 8.8, 22.8 8.8 C 20.9 8.8, 19.9 10.4, 20.2 12.6 C 20.6 16, 22.4 20.5, 19.8 25.8 Z" fill="#2c2c2c"/></svg>
<svg style="left:769px;top:55px;" width="34" height="34" viewBox="0 0 34 34"><path d="M22.5 12.5 A 8.5 8.5 0 1 0 22.5 22" fill="none" stroke="#bdbdbd" stroke-width="1"/><rect x="12" y="15" width="5" height="5" rx="1.2" fill="none" stroke="#8a8a8a" stroke-width="0.8"/><path d="M14.5 16.3 v2.4 M13.3 17.5 h2.4" stroke="#9a9a9a" stroke-width="0.7"/><path d="M22 16 C 23 13, 25 11, 27.5 8 C 28 11, 26 14, 23.5 16.5 Z" fill="#e0e0e0"/><text x="24.5" y="27" font-family="Liberation Sans" font-weight="700" font-size="8.5" text-anchor="middle" fill="#e8e8e8">S</text></svg>
<svg style="left:949px;top:55px;" width="34" height="34" viewBox="0 0 34 34"><path d="M22.5 12.5 A 8.5 8.5 0 1 0 22.5 22" fill="none" stroke="#bdbdbd" stroke-width="1"/><rect x="12" y="15" width="5" height="5" rx="1.2" fill="none" stroke="#8a8a8a" stroke-width="0.8"/><path d="M14.5 16.3 v2.4 M13.3 17.5 h2.4" stroke="#9a9a9a" stroke-width="0.7"/><path d="M22 16 C 23 13, 25 11, 27.5 8 C 28 11, 26 14, 23.5 16.5 Z" fill="#e0e0e0"/><text x="24.5" y="27" font-family="Liberation Sans" font-weight="700" font-size="8.5" text-anchor="middle" fill="#e8e8e8">D</text></svg>
<svg style="left:1686px;top:150px;" width="33" height="22" viewBox="0 0 33 22"><rect x="17" y="6.5" width="9" height="10" fill="#555" stroke="#9a9a9a" stroke-width="0.8"/><path d="M21.5 7.5 v8 M18 11.5 h7" stroke="#ddd" stroke-width="0.8"/><g transform="translate(5,6)"><path d="M2 6 C 1 5, 2.5 4, 3.5 5 L 5 7 L 4.5 1.8 C 4.5 0.6, 6 0.6, 6 1.8 L 6.5 5 L 7 0.8 C 7.2 -0.3, 8.7 -0.2, 8.6 1 L 8.5 5 L 9.5 1.5 C 9.8 0.5, 11.2 0.7, 11 1.8 L 10.3 5.3 L 11.5 3 C 12 2, 13.3 2.5, 12.8 3.6 L 11 8.5 C 10 11, 8.5 12, 6.5 12 C 4.5 12, 3.5 10.5, 2 6 Z" fill="#e8e8e8" stroke="#555" stroke-width="0.5"/></g></svg>
<svg style="left:1686px;top:186px;" width="33" height="22" viewBox="0 0 33 22"><rect x="16" y="6.5" width="10" height="10.5" fill="#555" stroke="#9a9a9a" stroke-width="0.8"/><path d="M21 8 l-2 2 h4 z M21 16 l-2 -2 h4 z M21 9.5 v5" fill="#ddd" stroke="#ddd" stroke-width="0.6"/><circle cx="14" cy="10" r="4" fill="#3a3a3a" stroke="#d8d8d8" stroke-width="1.1"/><line x1="11.2" y1="12.8" x2="6" y2="18" stroke="#d8d8d8" stroke-width="1.4" stroke-linecap="round"/></svg>
<svg style="left:1686px;top:222px;" width="33" height="22" viewBox="0 0 33 22"><rect x="16" y="6.5" width="10" height="10.5" fill="#555" stroke="#9a9a9a" stroke-width="0.8"/><text x="21" y="15.5" font-family="Liberation Sans" font-size="7" text-anchor="middle" fill="#ccc">x1</text><circle cx="14" cy="10" r="4" fill="#3a3a3a" stroke="#d8d8d8" stroke-width="1.1"/><line x1="11.2" y1="12.8" x2="6" y2="18" stroke="#d8d8d8" stroke-width="1.4" stroke-linecap="round"/></svg>
<svg style="left:1686px;top:258px;" width="33" height="22" viewBox="0 0 33 22"><rect x="16" y="6.5" width="10" height="10.5" fill="#5a5a5a"/><rect x="20.5" y="6.5" width="5.5" height="5.5" fill="#b8b8b8"/><circle cx="14" cy="10" r="4" fill="#3a3a3a" stroke="#d8d8d8" stroke-width="1.1"/><line x1="11.2" y1="12.8" x2="6" y2="18" stroke="#d8d8d8" stroke-width="1.4" stroke-linecap="round"/></svg>
<div class="a" style="left:1691px;top:311px;width:23px;height:1px;background:#555;"></div>
<svg style="left:1686px;top:330px;" width="33" height="20" viewBox="0 0 33 20"><path d="M16.5 11 v6 M14 14.5 l2.5 3 l2.5 -3" stroke="#6a6a6a" stroke-width="1.4" fill="none"/><rect x="5" y="17.5" width="23" height="1.5" fill="#6a6a6a"/></svg>
<svg style="left:1686px;top:366px;" width="33" height="20" viewBox="0 0 33 20"><path d="M4 14.8 l3 -2.5 v5 z M29 14.8 l-3 -2.5 v5 z" fill="#5a5a5a"/><path d="M7 14.8 h5 M21 14.8 h5" stroke="#5a5a5a" stroke-width="1.5"/><path d="M16.5 10.5 v7" stroke="#5a5a5a" stroke-width="1" stroke-dasharray="1.5 1"/><path d="M5 18.5 h23" stroke="#4a4a4a" stroke-width="0.8" stroke-dasharray="2 1"/></svg>
<svg style="left:1686px;top:402px;" width="33" height="33" viewBox="0 0 33 33"><circle cx="9" cy="16.5" r="3" fill="none" stroke="#aaa" stroke-width="1"/><rect x="8" y="17.5" width="13" height="6" rx="1" fill="#9a9a9a"/><path d="M4 19 l4 1 v3 l-4 1 z" fill="#aaa"/><path d="M16.5 11 v-2.5 a3.5 3.5 0 0 1 7 0 v2.5" fill="none" stroke="#ccc" stroke-width="1.6"/><rect x="14.5" y="11" width="11" height="8" rx="1" fill="#c8c8c8"/><rect x="18.5" y="14" width="3" height="2" fill="#777"/></svg>
<svg style="left:1686px;top:438px;" width="33" height="15" viewBox="0 0 33 15"><path d="M9 11 a4 4 0 1 1 5 -3" fill="none" stroke="#5e3f1c" stroke-width="1"/><text x="18" y="12.5" font-family="Liberation Sans" font-size="8.5" text-anchor="middle" fill="#5e3f1c">XYZ</text></svg>
<svg style="left:1693px;top:456px;" width="20" height="14" viewBox="0 0 20 14"><path d="M7 9 a3.5 3.5 0 1 1 4 -3" fill="none" stroke="#5a5a5a" stroke-width="1"/><text x="11" y="11" font-family="Liberation Sans" font-size="7.5" fill="#5a5a5a">Y</text></svg>
<svg style="left:1697px;top:473px;" width="20" height="14" viewBox="0 0 20 14"><path d="M7 9 a3.5 3.5 0 1 1 4 -3" fill="none" stroke="#5a5a5a" stroke-width="1"/><text x="10" y="11.5" font-family="Liberation Sans" font-size="7.5" fill="#5a5a5a">Z</text></svg>
<svg style="left:1686px;top:492px;" width="33" height="20" viewBox="0 0 33 20"><g fill="#d8d8d8"><path d="M8.5 6 h4 v1.5 h-2.5 v2.5 h-1.5 z"/><path d="M24.5 6 h-4 v1.5 h2.5 v2.5 h1.5 z"/><path d="M8.5 17.5 h4 v-1.5 h-2.5 v-2.5 h-1.5 z"/><path d="M24.5 17.5 h-4 v-1.5 h2.5 v-2.5 h1.5 z"/></g><path d="M10.5 8 l2 2 M22.5 8 l-2 2 M10.5 15.5 l2 -2 M22.5 15.5 l-2 -2" stroke="#999" stroke-width="0.8"/><circle cx="16.2" cy="12.6" r="2.7" fill="url(#sg)"/></svg>
<svg style="left:1686px;top:528px;" width="33" height="22" viewBox="0 0 33 22"><circle cx="20" cy="11.5" r="6" fill="url(#sg)"/><rect x="18" y="9.5" width="4" height="3" fill="none" stroke="#333" stroke-width="0.8"/><g transform="translate(5,8) scale(0.95)"><path d="M2 6 C 1 5, 2.5 4, 3.5 5 L 5 7 L 4.5 1.8 C 4.5 0.6, 6 0.6, 6 1.8 L 6.5 5 L 7 0.8 C 7.2 -0.3, 8.7 -0.2, 8.6 1 L 8.5 5 L 9.5 1.5 C 9.8 0.5, 11.2 0.7, 11 1.8 L 10.3 5.3 L 11.5 3 C 12 2, 13.3 2.5, 12.8 3.6 L 11 8.5 C 10 11, 8.5 12, 6.5 12 C 4.5 12, 3.5 10.5, 2 6 Z" fill="#e8e8e8" stroke="#555" stroke-width="0.5"/></g></svg>
<svg style="left:1686px;top:564px;" width="33" height="22" viewBox="0 0 33 22"><circle cx="20.5" cy="9.8" r="6" fill="url(#sg)"/><circle cx="13" cy="9" r="3.8" fill="#3a3a3a" stroke="#d8d8d8" stroke-width="1.1"/><line x1="10.34" y1="11.66" x2="6" y2="17" stroke="#d8d8d8" stroke-width="1.4" stroke-linecap="round"/></svg>
<svg style="left:1686px;top:600px;" width="33" height="22" viewBox="0 0 33 22"><circle cx="16.3" cy="14.7" r="6" fill="url(#sg)"/><path d="M12 12 a5 5 0 0 1 8 -5" fill="none" stroke="#ddd" stroke-width="1.3"/><path d="M21 13 a4 4 0 0 1 0 8 l-2 0" fill="none" stroke="#ddd" stroke-width="1.3"/><rect x="14.5" y="13" width="4" height="3.5" fill="none" stroke="#222" stroke-width="0.9"/></svg>
<svg style="left:1686px;top:636px;" width="33" height="22" viewBox="0 0 33 22"><rect x="7.5" y="7.5" width="18" height="12" fill="none" stroke="#555" stroke-width="0.9"/><path d="M16.5 7.5 v12 M7.5 11.5 h18 M7.5 15.5 h18" stroke="#555" stroke-width="0.7"/></svg>
<svg style="left:1686px;top:672px;" width="33" height="22" viewBox="0 0 33 22"><rect x="13.5" y="6.5" width="11" height="9.5" fill="none" stroke="#4e4e4e" stroke-width="0.9"/><circle cx="14.5" cy="14" r="5" fill="#3e3e3e"/></svg>
<svg style="left:1686px;top:708px;" width="33" height="22" viewBox="0 0 33 22"><circle cx="15" cy="12" r="5.5" fill="#6a4420"/><line x1="8" y1="19" x2="24" y2="5" stroke="#5a3a1a" stroke-width="1"/></svg>
<svg style="left:1686px;top:744px;" width="33" height="24" viewBox="0 0 33 24"><circle cx="10.5" cy="15.7" r="4.2" fill="#555"/><circle cx="21.6" cy="15.7" r="4.2" fill="#555"/><circle cx="16" cy="12.9" r="4.3" fill="#d0d0d0"/></svg>
<svg style="left:1686px;top:780px;" width="33" height="22" viewBox="0 0 33 22"><g stroke="#4e4e4e" stroke-width="0.9" fill="none"><path d="M10 6 l4 4 M23 6 l-4 4 M10 17 l4 -4 M23 17 l-4 -4 M6 11.5 h4 M27 11.5 h-4"/></g><circle cx="16.5" cy="11.5" r="1" fill="#666"/></svg>
<svg style="left:1754px;top:222px;" width="72" height="62" viewBox="0 0 72 62"><defs><linearGradient id="gold" gradientUnits="userSpaceOnUse" x1="10" y1="5" x2="60" y2="60"><stop offset="0" stop-color="#ffb31a"/><stop offset="0.45" stop-color="#f39000"/><stop offset="1" stop-color="#b35500"/></linearGradient><linearGradient id="goldh" gradientUnits="userSpaceOnUse" x1="10" y1="5" x2="60" y2="60"><stop offset="0" stop-color="#ffe680"/><stop offset="1" stop-color="#ffc030"/></linearGradient></defs><g transform="translate(0,0) scale(1.0)"><path d="M 46.5 11.5 C 45 6, 40 5.5, 36 7.5 C 31 10, 28.5 14, 29.5 18" fill="none" stroke="#6e2c00" stroke-width="10.5" stroke-linecap="round"/><path d="M 29.5 18 C 30.5 22, 36 24, 42 27 C 48 30, 52 34, 51.5 40" fill="none" stroke="#6e2c00" stroke-width="13" stroke-linecap="round"/><path d="M 51.5 40 C 51 47, 44 52, 35 52.5 C 26 53, 19 49, 17.5 43 C 16.5 38, 18 35, 20.5 33.5" fill="none" stroke="#6e2c00" stroke-width="15" stroke-linecap="round"/><path d="M 46.5 11.5 C 45 6, 40 5.5, 36 7.5 C 31 10, 28.5 14, 29.5 18" fill="none" stroke="url(#gold)" stroke-width="8.5" stroke-linecap="round"/><path d="M 29.5 18 C 30.5 22, 36 24, 42 27 C 48 30, 52 34, 51.5 40" fill="none" stroke="url(#gold)" stroke-width="11" stroke-linecap="round"/><path d="M 51.5 40 C 51 47, 44 52, 35 52.5 C 26 53, 19 49, 17.5 43 C 16.5 38, 18 35, 20.5 33.5" fill="none" stroke="url(#gold)" stroke-width="13" stroke-linecap="round"/><path d="M 46.5 11.5 C 45 6, 40 5.5, 36 7.5 C 31 10, 28.5 14, 29.5 18" fill="none" stroke="url(#goldh)" stroke-width="2.5" stroke-linecap="round" opacity="0.75" transform="translate(-1.2,-1.5)"/><path d="M 29.5 18 C 30.5 22, 36 24, 42 27 C 48 30, 52 34, 51.5 40" fill="none" stroke="url(#goldh)" stroke-width="3.3" stroke-linecap="round" opacity="0.75" transform="translate(-1.2,-1.5)"/><path d="M 51.5 40 C 51 47, 44 52, 35 52.5 C 26 53, 19 49, 17.5 43 C 16.5 38, 18 35, 20.5 33.5" fill="none" stroke="url(#goldh)" stroke-width="3.9" stroke-linecap="round" opacity="0.75" transform="translate(-1.2,-1.5)"/></g></svg>
<svg style="left:1826px;top:258px;" width="72" height="30" viewBox="0 0 72 30"><g transform="translate(22,1) scale(0.41)"><path d="M 46.5 11.5 C 45 6, 40 5.5, 36 7.5 C 31 10, 28.5 14, 29.5 18" fill="none" stroke="#6e2c00" stroke-width="10.5" stroke-linecap="round"/><path d="M 29.5 18 C 30.5 22, 36 24, 42 27 C 48 30, 52 34, 51.5 40" fill="none" stroke="#6e2c00" stroke-width="13" stroke-linecap="round"/><path d="M 51.5 40 C 51 47, 44 52, 35 52.5 C 26 53, 19 49, 17.5 43 C 16.5 38, 18 35, 20.5 33.5" fill="none" stroke="#6e2c00" stroke-width="15" stroke-linecap="round"/><path d="M 46.5 11.5 C 45 6, 40 5.5, 36 7.5 C 31 10, 28.5 14, 29.5 18" fill="none" stroke="url(#gold)" stroke-width="8.5" stroke-linecap="round"/><path d="M 29.5 18 C 30.5 22, 36 24, 42 27 C 48 30, 52 34, 51.5 40" fill="none" stroke="url(#gold)" stroke-width="11" stroke-linecap="round"/><path d="M 51.5 40 C 51 47, 44 52, 35 52.5 C 26 53, 19 49, 17.5 43 C 16.5 38, 18 35, 20.5 33.5" fill="none" stroke="url(#gold)" stroke-width="13" stroke-linecap="round"/><path d="M 46.5 11.5 C 45 6, 40 5.5, 36 7.5 C 31 10, 28.5 14, 29.5 18" fill="none" stroke="url(#goldh)" stroke-width="2.5" stroke-linecap="round" opacity="0.75" transform="translate(-1.2,-1.5)"/><path d="M 29.5 18 C 30.5 22, 36 24, 42 27 C 48 30, 52 34, 51.5 40" fill="none" stroke="url(#goldh)" stroke-width="3.3" stroke-linecap="round" opacity="0.75" transform="translate(-1.2,-1.5)"/><path d="M 51.5 40 C 51 47, 44 52, 35 52.5 C 26 53, 19 49, 17.5 43 C 16.5 38, 18 35, 20.5 33.5" fill="none" stroke="url(#goldh)" stroke-width="3.9" stroke-linecap="round" opacity="0.75" transform="translate(-1.2,-1.5)"/></g></svg>
<svg style="left:1826px;top:220px;" width="72" height="40" viewBox="0 0 72 40"><defs><linearGradient id="cyl" x1="0" x2="1"><stop offset="0" stop-color="#aaa"/><stop offset="0.35" stop-color="#d4d4d4"/><stop offset="1" stop-color="#9a9a9a"/></linearGradient></defs><g transform="rotate(-16 36 18)"><path d="M 25.5 8 L 25.5 26 A 10.5 4.5 0 0 0 46.5 26 L 46.5 8 Z" fill="url(#cyl)"/><ellipse cx="36" cy="8" rx="10.5" ry="4.5" fill="#d6d6d6"/></g></svg>
<svg style="left:1734px;top:17px;" width="16" height="18" viewBox="0 0 16 18"><path d="M3 7 L 8.5 2 L 10 3.2 L 6 8.5 Z" fill="#9a9a9a"/><line x1="7" y1="5" x2="13.5" y2="15.5" stroke="#9a9a9a" stroke-width="1.8" stroke-linecap="round"/></svg>
<svg style="left:1896px;top:21px;" width="12" height="11" viewBox="0 0 12 11"><path d="M3 3.5 A 4 4 0 1 0 6 2" fill="none" stroke="#e8e8e8" stroke-width="1.5"/><path d="M1.5 1.5 L 5 2.5 L 2.8 5.2 Z" fill="#e8e8e8"/><path d="M6 6 L 7.5 7" stroke="#e8e8e8" stroke-width="1.2"/></svg>
<svg style="left:0px;top:0px;" width="16" height="17" viewBox="0 0 16 17"><circle cx="8.3" cy="3.4" r="1.4" fill="#d8d8d8"/><g fill="none" stroke="#d8d8d8" stroke-linecap="round" stroke-linejoin="round"><path d="M2.4 7.4 L 4.6 5.8 Q 6.5 5 8.5 5.6 L 11.3 5.9" stroke-width="1.5"/><path d="M8.2 6 L 7.6 9.3" stroke-width="1.7"/><path d="M0.6 13.3 L 3.6 11.4 Q 7 9.2 10 10.4 Q 12 11.4 12.6 13.6" stroke-width="1.8"/></g></svg>
<svg style="left:1758px;top:2px;" width="40" height="14" viewBox="0 0 40 14"><path d="M3 7 L 6 4 v6 z" fill="#bbb"/><path d="M8 4 v6 M10.5 4 v6 M12.5 4 v6 M14.5 4 v6 M16 4 v6" stroke="#bbb" stroke-width="1"/><path d="M24 4 v6 M25.5 4 v6 M27.5 4 v6 M30 4 v6 M32 4 v6" stroke="#bbb" stroke-width="1"/><path d="M37 7 L 34 4 v6 z" fill="#bbb"/></svg>
<svg style="left:1806px;top:1px;" width="42" height="16" viewBox="0 0 42 16"><path d="M2.5 8 L 5.5 5 v6 z" fill="#bbb"/><rect x="8" y="3" width="8" height="6" fill="#333" stroke="#bbb" stroke-width="1"/><rect x="11" y="6" width="7" height="6" fill="#333" stroke="#bbb" stroke-width="1"/><rect x="8.5" y="9" width="6" height="4" fill="none" stroke="#999" stroke-width="0.8"/><rect x="28" y="3" width="8" height="6" fill="#333" stroke="#bbb" stroke-width="1"/><rect x="25" y="6" width="7" height="6" fill="#333" stroke="#bbb" stroke-width="1"/><path d="M39.5 8 L 36.5 5 v6 z" fill="#bbb"/></svg>
<svg style="left:1860px;top:2px;" width="12" height="14" viewBox="0 0 12 14"><path d="M2 5 h8 l-4 3.5 z" fill="#ddd"/><rect x="2" y="10" width="8" height="1.6" fill="#ddd"/></svg>
<svg style="left:1881px;top:2px;" width="12" height="14" viewBox="0 0 12 14"><rect x="4.5" y="3.5" width="6" height="5" fill="none" stroke="#ddd" stroke-width="1.2"/><rect x="1.5" y="6.5" width="6" height="5" fill="#1a1a1a" stroke="#ddd" stroke-width="1.2"/></svg>
<svg style="left:1903px;top:2px;" width="12" height="14" viewBox="0 0 12 14"><path d="M2.5 3.5 L 9.5 10.5 M9.5 3.5 L 2.5 10.5" stroke="#eee" stroke-width="1.8"/></svg>
<div class="a" style="left:1571px;top:186px;width:107px;height:32px;background:rgba(70,70,70,0.75);border-radius:4px"></div>
<div class="t" style="left:1580.40px;top:196px;font-size:12px;color:#e0e0e0;transform:scaleX(0.9727);">Zoom Document</div>
<div class="a" style="left:1666px;top:134px;width:74px;height:176px;border:10px solid #fff;border-radius:11px"></div>
<svg style="left:0;top:0" width="1920" height="1080"><circle cx="1611.4" cy="197.3" r="30.5" fill="none" stroke="#a8a8a8" stroke-width="1"/><circle cx="1611.4" cy="196.8" r="15" fill="none" stroke="#8a8a8a" stroke-width="1"/><polygon points="1603.8,201.8 1603.8,257.9 1662.9,229.3" fill="#fff"/><polygon points="1608.9,209 1608.9,249.7 1652.2,229.3" fill="#f00"/></svg>
<div class="a" style="left:3px;top:501px;width:4px;height:37px;background:repeating-conic-gradient(#404040 0 25%,#2c2c2c 0 50%) 0 0/2px 2px;border-radius:1px;"></div>
<div class="a" style="left:3px;top:558px;width:4px;height:39px;background:repeating-conic-gradient(#404040 0 25%,#2c2c2c 0 50%) 0 0/2px 2px;border-radius:1px;"></div>
<svg style="left:0;top:0" width="10" height="1080"><polygon points="3,540.7 7,544.7 3,548.7" fill="#6a6a6a"/><polygon points="7,548.2 3,552.2 7,556.2" fill="#6a6a6a"/></svg>
<div class="a" style="left:1725px;top:501px;width:4px;height:37px;background:repeating-conic-gradient(#404040 0 25%,#2c2c2c 0 50%) 0 0/2px 2px;border-radius:1px;"></div>
<div class="a" style="left:1725px;top:558px;width:4px;height:39px;background:repeating-conic-gradient(#404040 0 25%,#2c2c2c 0 50%) 0 0/2px 2px;border-radius:1px;"></div>
<svg style="left:1720px;top:0" width="12" height="1080"><polygon points="5,540.7 9,544.7 5,548.7" fill="#6a6a6a"/><polygon points="9,548.2 5,552.2 9,556.2" fill="#6a6a6a"/></svg>
<div class="a" style="left:836px;top:1073px;width:38px;height:5px;background:repeating-conic-gradient(#404040 0 25%,#2c2c2c 0 50%) 0 0/2px 2px;border-radius:1px;"></div>
<div class="a" style="left:894px;top:1073px;width:38px;height:5px;background:repeating-conic-gradient(#404040 0 25%,#2c2c2c 0 50%) 0 0/2px 2px;border-radius:1px;"></div>
<svg style="left:870px;top:1068px" width="30" height="12"><polygon points="6,10 10.5,5 15,10" fill="#8a8a8a"/><polygon points="14,5 22,5 18,10" fill="#8a8a8a"/></svg>
</body></html>
